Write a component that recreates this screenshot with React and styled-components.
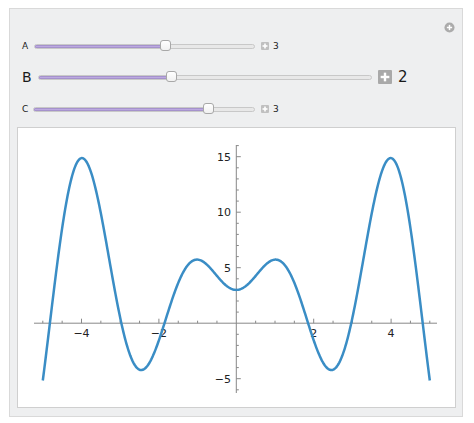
import React from 'react';
import styled, { createGlobalStyle } from 'styled-components';

const Global = createGlobalStyle`
  html, body { margin: 0; padding: 0; background: #ffffff; }
  body { font-family: "DejaVu Sans", "Liberation Sans", sans-serif; }
`;

const Panel = styled.div`
  position: relative;
  box-sizing: border-box;
  margin: 8px 0 0 9px;
  width: 454px;
  height: 409px;
  background: #eeeff0;
  border: 1px solid #d9d9d9;
  display: flex;
  flex-direction: column;
  padding: 30px 6px 8px 7px;
`;

const Gear = styled.svg`
  position: absolute;
  top: 13px;
  right: 7px;
  width: 11px;
  height: 11px;
`;

const Row = styled.div`
  display: flex;
  align-items: center;
  height: ${(p) => p.$h}px;
  margin-top: ${(p) => p.$mt}px;
  padding-left: 5px;
`;

const Label = styled.div`
  width: ${(p) => p.$w}px;
  flex: none;
  font-size: ${(p) => p.$fs}px;
  line-height: 1;
  color: #1a1a1a;
`;

const Track = styled.div`
  position: relative;
  flex: none;
  width: ${(p) => p.$w}px;
  height: 12px;
  display: flex;
  align-items: center;
`;

const Rail = styled.div`
  position: relative;
  box-sizing: border-box;
  width: 100%;
  height: 5px;
  border-radius: 3px;
  background: #e8e8e8;
  border: 1px solid #c8c8c8;
  overflow: hidden;
`;

const Fill = styled.div`
  height: 100%;
  background: #bca9e0;
  box-shadow: inset 0 0 0 1px #a592cc;
`;

const Thumb = styled.div`
  position: absolute;
  top: 0;
  box-sizing: border-box;
  width: 11px;
  height: 11px;
  margin-left: -5.5px;
  border-radius: 3px;
  background: linear-gradient(#ffffff, #f1f1f1);
  border: 1px solid #a8a8a8;
`;

const PlusBox = styled.div`
  flex: none;
  box-sizing: border-box;
  width: ${(p) => p.$s}px;
  height: ${(p) => p.$s}px;
  margin-left: ${(p) => p.$ml}px;
  background: ${(p) => (p.$big ? '#a9a9a9' : '#c0c0c0')};
  border-radius: 1px;
  display: flex;
  align-items: center;
  justify-content: center;
`;

const Value = styled.div`
  margin-left: ${(p) => p.$ml}px;
  font-size: ${(p) => p.$fs}px;
  line-height: 1;
  color: #1a1a1a;
`;

const PlotFrame = styled.div`
  flex: 1;
  margin-top: 11px;
  box-sizing: border-box;
  background: #ffffff;
  border: 1px solid #cfcfcf;
  overflow: hidden;
`;

const PlotSvg = styled.svg`
  display: block;
`;

function Plus({ s }) {
  const t = s > 10 ? 2.4 : 1.6;
  const l = s * 0.62;
  return (
    <svg width={s} height={s} viewBox={`0 0 ${s} ${s}`}>
      <rect x={(s - l) / 2} y={(s - t) / 2} width={l} height={t} fill="#fff" />
      <rect x={(s - t) / 2} y={(s - l) / 2} width={t} height={l} fill="#fff" />
    </svg>
  );
}

function Slider({ label, labelW, labelFs, width, frac, big, plusMl, valueMl, value, h, mt }) {
  const pct = `${frac * 100}%`;
  const s = big ? 14 : 8;
  return (
    <Row $h={h} $mt={mt}>
      <Label $w={labelW} $fs={labelFs}>{label}</Label>
      <Track $w={width}>
        <Rail>
          <Fill style={{ width: pct }} />
        </Rail>
        <Thumb style={{ left: pct }} />
      </Track>
      <PlusBox $s={s} $ml={plusMl} $big={big}>
        <Plus s={s} />
      </PlusBox>
      <Value $ml={valueMl} $fs={big ? 15 : 9}>{value}</Value>
    </Row>
  );
}

const OX = 236.3;
const OY = 323.2;
const SX = 38.7;
const SY = 11.1;
const A = 3, B = 2, C = 3;
const f = (x) => A * x * Math.sin(B * x) + C;

function Plot() {
  const pts = [];
  for (let i = 0; i <= 500; i++) {
    const x = -5 + (10 * i) / 500;
    pts.push(`${(OX + SX * x).toFixed(2)},${(OY - SY * f(x)).toFixed(2)}`);
  }
  const xt = [];
  for (let k = -10; k <= 10; k++) {
    if (k === 0) continue;
    const v = k / 2;
    const major = v % 2 === 0;
    const px = OX + SX * v;
    xt.push(<line key={`x${k}`} x1={px} x2={px} y1={OY} y2={OY - (major ? 4.5 : 2.5)} stroke="#888" strokeWidth="1" />);
  }
  const yt = [];
  for (let v = -6; v <= 16; v++) {
    if (v === 0) continue;
    const major = v % 5 === 0;
    const py = OY - SY * v;
    yt.push(<line key={`y${v}`} x1={OX} x2={OX + (major ? 4.5 : 2.5)} y1={py} y2={py} stroke="#888" strokeWidth="1" />);
  }
  const txt = { fontFamily: '"DejaVu Sans", sans-serif', fontSize: 11, fill: '#222' };
  return (
    <PlotSvg width="437" height="279" viewBox="18 128 437 279">
      <line x1="34" x2="437" y1={OY} y2={OY} stroke="#888" strokeWidth="1" />
      <line x1={OX} x2={OX} y1="145" y2="393" stroke="#888" strokeWidth="1" />
      {xt}
      {yt}
      {[-4, -2, 2, 4].map((v) => (
        <text key={v} x={OX + SX * v} y={337} textAnchor="middle" {...txt}>
          {v < 0 ? `\u2212${-v}` : v}
        </text>
      ))}
      {[-5, 5, 10, 15].map((v) => (
        <text key={v} x={231} y={OY - SY * v + 4} textAnchor="end" {...txt}>
          {v < 0 ? `\u2212${-v}` : v}
        </text>
      ))}
      <polyline points={pts.join(' ')} fill="none" stroke="#3a8dc5" strokeWidth="2.5" strokeLinejoin="round" />
    </PlotSvg>
  );
}

export default function App() {
  return (
    <>
      <Global />
      <Panel>
        <Gear viewBox="0 0 10 10">
          <circle cx="5" cy="5" r="4.6" fill="#ababab" />
          <rect x="2.6" y="4.3" width="4.8" height="1.4" fill="#fff" />
          <rect x="4.3" y="2.6" width="1.4" height="4.8" fill="#fff" />
        </Gear>
        <Slider label="A" labelW={12} labelFs={9} width={221} frac={0.595} plusMl={6} valueMl={4} value="3" h={14} mt={0} />
        <Slider label="B" labelW={16} labelFs={14} width={334} frac={0.40} big plusMl={6} valueMl={6} value="2" h={20} mt={14} />
        <Slider label="C" labelW={11} labelFs={9} width={222} frac={0.79} plusMl={6} valueMl={4} value="3" h={14} mt={15} />
        <PlotFrame>
          <Plot />
        </PlotFrame>
      </Panel>
    </>
  );
}
